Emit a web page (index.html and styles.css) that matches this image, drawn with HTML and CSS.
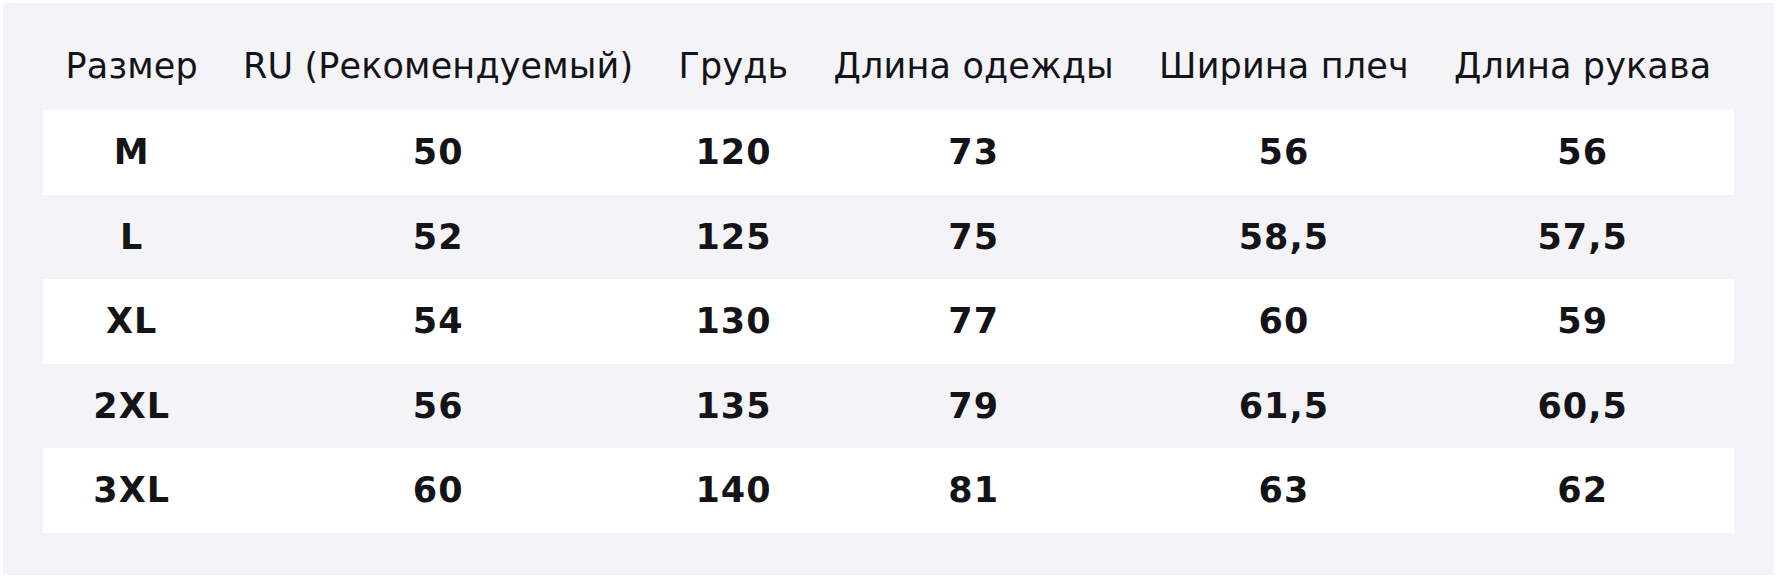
FILE: index.html
```html
<!DOCTYPE html>
<html lang="ru">
<head>
<meta charset="utf-8">
<title>Таблица размеров</title>
<link rel="stylesheet" href="styles.css">
</head>
<body>
<div class="panel">
  <table class="sizes">
    <thead>
      <tr>
        <th>Размер</th>
        <th>RU (Рекомендуемый)</th>
        <th>Грудь</th>
        <th>Длина одежды</th>
        <th>Ширина плеч</th>
        <th>Длина рукава</th>
      </tr>
    </thead>
    <tbody>
      <tr class="odd"><td>M</td><td>50</td><td>120</td><td>73</td><td>56</td><td>56</td></tr>
      <tr class="even"><td>L</td><td>52</td><td>125</td><td>75</td><td>58,5</td><td>57,5</td></tr>
      <tr class="odd"><td>XL</td><td>54</td><td>130</td><td>77</td><td>60</td><td>59</td></tr>
      <tr class="even"><td>2XL</td><td>56</td><td>135</td><td>79</td><td>61,5</td><td>60,5</td></tr>
      <tr class="odd"><td>3XL</td><td>60</td><td>140</td><td>81</td><td>63</td><td>62</td></tr>
    </tbody>
  </table>
</div>
</body>
</html>
```

FILE: styles.css
```css
html, body {
  margin: 0;
  padding: 0;
  background: #ffffff;
}
body {
  padding: 3px;
  font-family: "DejaVu Sans", Verdana, sans-serif;
  color: #131318;
}
.panel {
  background: #f4f4f8;
  padding: 40px 40px 42px;
  height: 572px;
  box-sizing: border-box;
}
.sizes {
  width: 100%;
  border-collapse: collapse;
  border-spacing: 0;
}
.sizes th {
  font-weight: normal;
  font-size: 35px;
  line-height: 41px;
  letter-spacing: 0.15px;
  padding: 3px 22.5px 23px;
  text-align: center;
  white-space: nowrap;
}
.sizes td {
  font-weight: bold;
  font-size: 35px;
  line-height: 41px;
  letter-spacing: 1px;
  padding: 22px 22.5px 21.6px;
  text-align: center;
}
.sizes tr.odd td {
  background: #ffffff;
}
.sizes tr.even td {
  background: transparent;
}
```
